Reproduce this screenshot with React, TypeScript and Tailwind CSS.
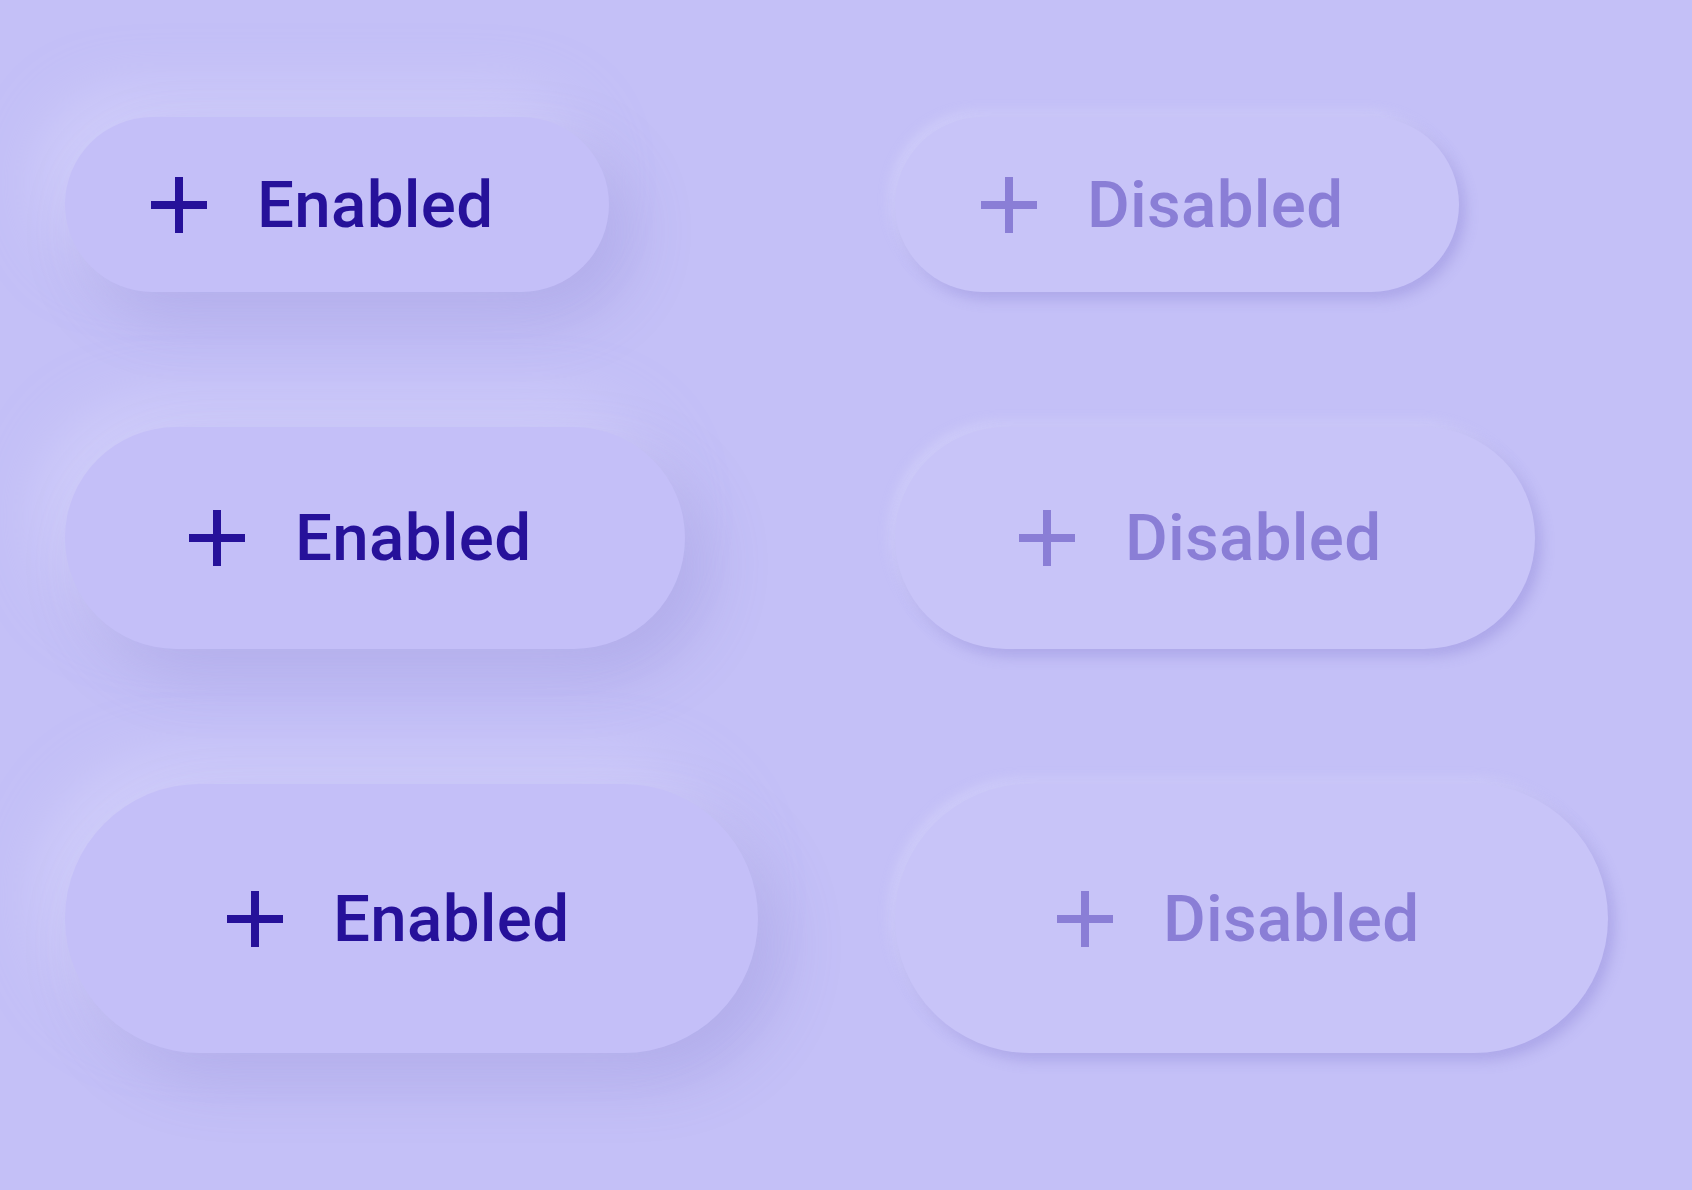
import { Plus } from "lucide-react";

/* -----------------------------
   DATA
----------------------------- */

const sizes = [
  { height: "h-[175px]", pad: "pl-[86px] pr-[116px]" },
  { height: "h-[222px]", pad: "pl-[124px] pr-[154px]" },
  { height: "h-[269px]", pad: "pl-[162px] pr-[189px]" },
];

/* -----------------------------
   PLUS ICON
----------------------------- */

const PlusIcon = ({ className }: { className: string }) => (
  <svg width="56" height="56" viewBox="0 0 56 56" className={className}>
    <rect x="24" y="0" width="8" height="56" fill="currentColor" />
    <rect x="0" y="24" width="56" height="8" fill="currentColor" />
  </svg>
);

/* -----------------------------
   BUTTON
----------------------------- */

const NeuButton = ({
  size,
  disabled,
}: {
  size: (typeof sizes)[number];
  disabled?: boolean;
}) => {
  const base = `inline-flex items-center gap-[50px] rounded-full ${size.height} ${size.pad}`;

  if (disabled) {
    return (
      <button
        disabled
        className={`${base} bg-[#c8c4f8] text-[#8a7ed6] shadow-[6px_7px_14px_rgba(112,100,196,0.28),-5px_-5px_12px_rgba(230,228,255,0.35)]`}
      >
        <PlusIcon className="shrink-0" />
        <span className="text-[65.5px] font-medium leading-none tracking-[0.3px]">
          Disabled
        </span>
      </button>
    );
  }

  return (
    <button
      className={`${base} bg-[#c4bff8] text-[#26119a] shadow-[22px_26px_64px_rgba(110,98,190,0.22),-22px_-22px_60px_rgba(226,224,255,0.5)]`}
    >
      <PlusIcon className="shrink-0" />
      <span className="text-[65.5px] font-medium leading-none tracking-[0.3px]">
        Enabled
      </span>
    </button>
  );
};

/* -----------------------------
   APP
----------------------------- */

export default function App() {
  return (
    <div
      className="min-h-[1190px] w-full bg-[#c4c0f7] pl-[65px] pt-[117px]"
      style={{ fontFamily: "Roboto, 'Noto Sans', sans-serif" }}
    >
      <div className="grid grid-cols-[830px_auto] gap-y-[135px]">
        {sizes.map((s, i) => (
          <div key={i} className="contents">
            <div className="justify-self-start">
              <NeuButton size={s} />
            </div>
            <div className="justify-self-start">
              <NeuButton size={s} disabled />
            </div>
          </div>
        ))}
      </div>
    </div>
  );
}
